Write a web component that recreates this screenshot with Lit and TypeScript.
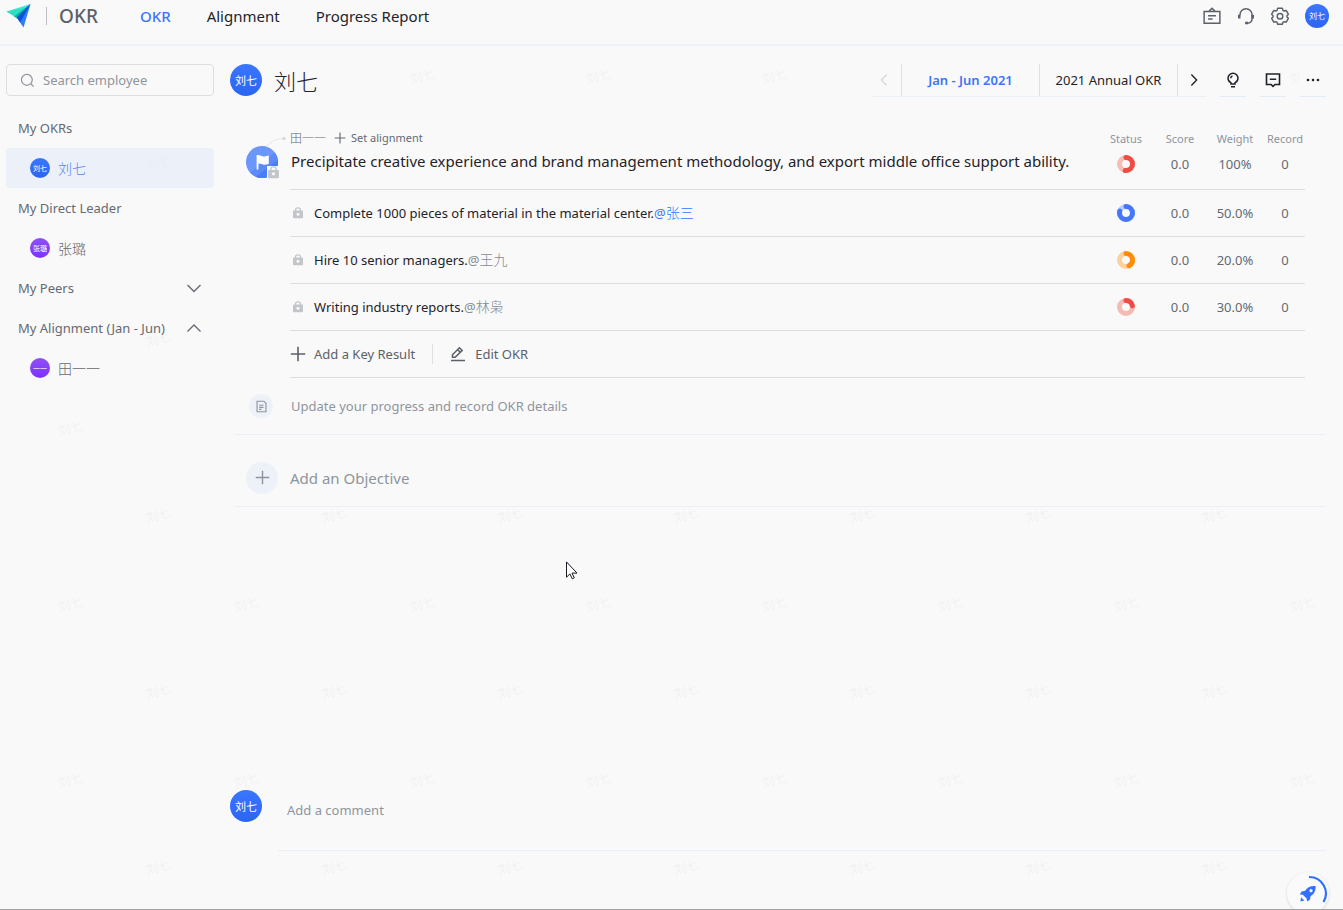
import { LitElement, html, css, svg } from "lit";
import { customElement, property, state } from "lit/decorators.js";
import { classMap } from "lit/directives/class-map.js";

const line = (body: unknown, size = 16, width = 1.3) => html`<svg
  width=${size}
  height=${size}
  viewBox="0 0 16 16"
  fill="none"
  stroke="currentColor"
  stroke-width=${width}
  aria-hidden="true"
>
  ${body}
</svg>`;

const icons = {
  search: svg`<circle cx="7.3" cy="7.3" r="5.8"/><path d="M11.500 11.500 14.500 14.500"/>`,
  report: svg`<path d="M1 4h14v10.500H1zM5 4l3-2.800L11 4M4.500 7.700h7M4.500 10.700h4"/>`,
  headset: svg`<path d="M2.600 7.500V7a5.400 5.400 0 0 1 10.800 0v3.500c0 2.500-1.700 3.900-4.400 3.900"/><path d="M2 6.800v3.400M14 6.800v3.400M7.200 14.300h2.600" stroke-width="2.200"/>`,
  gear: svg`<path d="M5.900 1.400h4.200l.5 1.900 1 .6 1.900-.5 2 3.400-1.300 1.200v1.200l1.300 1.200-2 3.400-1.900-.5-1 .6-.5 1.700H5.900l-.5-1.700-1-.6-1.900.5-2-3.400L1.800 9.200V8L.5 6.800l2-3.400 1.900.5 1-.6z" stroke-linejoin="round" transform="translate(0 -.3)"/><circle cx="8" cy="8.200" r="2.500"/>`,
  left: svg`<path d="M11 1.800 5 8l6 6.200"/>`,
  right: svg`<path d="M5 1.800 11 8l-6 6.200"/>`,
  down: svg`<path d="M1.500 5 8 11.500 14.500 5"/>`,
  up: svg`<path d="M1.500 11.500 8 5l6.500 6.500"/>`,
  bulb: svg`<path d="M6 12V10.800C4 9.700 3 8.200 3 6.200a5 5 0 0 1 10 0c0 2-1 3.500-3 4.600V12z"/><path d="M6 14.700h4M5.700 6.200c0-1.300.7-2 1.800-2.200"/>`,
  note: svg`<path d="M1.500 2h13v10.500H10L8 14.300 6 12.500H1.500zM4.800 7.200h6.400"/>`,
  plus: svg`<path d="M8 .8v14.400M.8 8h14.400"/>`,
  edit: svg`<path d="M2.500 11.300V8.700l6.900-7 2.800 2.700-7 6.900zM7.600 3.600l2.700 2.700M1 14.600h14"/>`,
  doc: svg`<path d="M2.500 1.500h8.500l2.500 2.500v10.500h-11zM5 6.500h5.500M5 9h5.500M5 11.500h3"/>`,
};

const lock = (size: number) => html`<svg width=${size} height=${size} viewBox="0 0 12 12" aria-hidden="true">
  <path d="M3.500 4V2.800a2.500 2 0 0 1 5 0V4" fill="none" stroke="#c2c5ca" stroke-width="1.300" />
  <rect x="1" y="3.600" width="10" height="7.600" rx=".8" fill="#c2c5ca" />
  <circle cx="6" cy="7.200" r="1.500" fill="#f9f9f9" />
</svg>`;

@customElement("user-avatar")
class UserAvatar extends LitElement {
  @property() name = "";
  @property() kind = "";

  static styles = css`
    :host {
      display: block;
      flex: none;
    }
    .disc {
      display: grid;
      place-items: center;
      width: 32px;
      height: 32px;
      border-radius: 50%;
      background: linear-gradient(#3b76ff, #2b66f3);
      color: #fff;
      font: 400 11px/1 "Noto Sans CJK SC", sans-serif;
      white-space: nowrap;
    }
    .top {
      width: 24px;
      height: 24px;
      font-size: 8px;
    }
    .small,
    .purple {
      width: 20px;
      height: 20px;
      font-size: 7px;
    }
    .purple {
      background: linear-gradient(#9050f7, #7c33fb);
    }
  `;

  render() {
    return html`<div class="disc ${this.kind}">${this.name}</div>`;
  }
}

@customElement("status-ring")
class StatusRing extends LitElement {
  @property() color = "";
  @property() track = "";
  @property({ type: Number }) share = 0;

  static styles = css`
    :host {
      display: block;
      height: 18px;
    }
  `;

  render() {
    return html`<svg width="18" height="18" viewBox="0 0 18 18" fill="none" stroke-width="5" role="img" aria-label="Status">
      <circle cx="9" cy="9" r="6.500" stroke=${this.track} />
      <circle
        cx="9"
        cy="9"
        r="6.500"
        stroke=${this.color}
        stroke-linecap="round"
        pathLength="100"
        stroke-dasharray="${this.share} 100"
        transform="rotate(-90 9 9)"
      />
    </svg>`;
  }
}

const keyResults = [
  { text: "Complete 1000 pieces of material in the material center.", owner: "张三", own: true, color: "#4577fd", track: "#b9cdfc", share: 80, weight: "50.0%" },
  { text: "Hire 10 senior managers.", owner: "王九", own: false, color: "#ff8c07", track: "#fdd09d", share: 42, weight: "20.0%" },
  { text: "Writing industry reports.", owner: "林枭", own: false, color: "#ee4c44", track: "#f5bab1", share: 22, weight: "30.0%" },
];

@customElement("app-root")
class AppRoot extends LitElement {
  @state() private period = "Jan - Jun 2021";

  static styles = css`
    :host {
      display: block;
      font: 13px/20px "Noto Sans", "Noto Sans CJK SC", sans-serif;
      color: #1f2329;
    }
    * {
      box-sizing: border-box;
    }
    svg {
      display: block;
      flex: none;
    }
    button,
    input {
      font: inherit;
      color: inherit;
      border: 0;
      margin: 0;
      padding: 0;
      background: none;
      border-radius: 0;
      outline: none;
    }
    button {
      cursor: pointer;
      text-align: left;
    }
    a {
      color: inherit;
      text-decoration: none;
    }
    h1,
    h2,
    p {
      margin: 0;
      font-weight: 400;
    }
    .cjk {
      font-family: "Noto Sans CJK SC", sans-serif;
      font-size: 14px;
      font-weight: 300;
      line-height: 1;
    }
    .page {
      position: relative;
      display: flex;
      flex-direction: column;
      min-height: 100vh;
      overflow: hidden;
      background: #f9f9f9;
      border-bottom: 1px solid #a3a3a3;
    }
    .marks {
      position: absolute;
      inset: 0;
      width: 100%;
      height: 100%;
      pointer-events: none;
    }
    .marks text {
      font: 300 13px "Noto Sans CJK SC", sans-serif;
      fill: #eceef1;
    }
    .header {
      position: relative;
      display: flex;
      align-items: center;
      height: 46px;
      padding: 0 14px 12px 6px;
      border-bottom: 2px solid #eef2f8;
    }
    .rule {
      width: 1px;
      height: 18px;
      background: #bbbfc4;
      margin: 0 12px 0 14px;
    }
    .brand {
      font-size: 19px;
      font-weight: 500;
      line-height: 24px;
      color: #5c6169;
    }
    .nav {
      display: flex;
      gap: 36px;
      margin-left: 42px;
      font-size: 15px;
      flex: 1;
    }
    .nav .current {
      color: #3f73fb;
      font-weight: 500;
    }
    .tools {
      display: flex;
      align-items: center;
      gap: 16px;
      color: #5c6169;
    }
    .body {
      position: relative;
      flex: 1;
      display: grid;
      grid-template-columns: 208px minmax(0, 1fr);
      gap: 16px;
      padding: 18px 17px 0 6px;
    }
    .search {
      display: flex;
      align-items: center;
      gap: 8px;
      height: 32px;
      padding: 0 13px;
      border: 1px solid #dcdee2;
      border-radius: 4px;
      background: #f9f9f9;
      color: #8f959e;
      margin-bottom: 12px;
    }
    .search input {
      flex: 1;
      min-width: 0;
    }
    input::placeholder {
      color: #8f959e;
      opacity: 1;
    }
    .group {
      display: flex;
      justify-content: space-between;
      align-items: center;
      width: 100%;
      height: 40px;
      padding: 0 12px;
      color: #646a73;
    }
    .person {
      display: flex;
      align-items: center;
      gap: 8px;
      height: 40px;
      padding-left: 24px;
      border-radius: 4px;
      color: #646a73;
    }
    .person.current {
      background: rgba(226, 234, 246, 0.6);
      color: #5684fb;
    }
    .main {
      display: flex;
      flex-direction: column;
    }
    .title {
      display: flex;
      align-items: flex-start;
      height: 33px;
    }
    .title h1 {
      flex: 1;
      margin-left: 12px;
      font-size: 22px;
      line-height: 32px;
    }
    .periods,
    .actions {
      display: flex;
      height: 33px;
    }
    .periods {
      background: #f9f9f9;
      border-bottom: 1px solid #ebf0f7;
    }
    .periods button {
      display: grid;
      place-items: center;
      width: 138px;
      border-left: 1px solid #dee0e3;
    }
    .periods .step {
      width: 29px;
      padding-left: 4px;
    }
    .periods .prev {
      border-left: 0;
      padding: 0 6px 0 0;
      color: #c9cdd4;
    }
    .periods .chosen {
      color: #3f73fb;
      font-weight: 600;
    }
    .actions {
      gap: 14px;
      margin-left: 14px;
    }
    .actions button {
      display: grid;
      place-items: center;
      width: 26px;
      background: #f9f9f9;
      border-bottom: 1px solid #e3ebf8;
    }
    .card {
      background: #f9f9f9;
      margin-top: 33px;
    }
    .objective {
      display: grid;
      grid-template-columns: 60px minmax(0, 1fr);
      padding-right: 21px;
    }
    .flag {
      position: relative;
      padding: 16px 0 0 16px;
    }
    .flag .badge {
      position: absolute;
      left: 37px;
      top: 36px;
      background: #f9f9f9;
    }
    .flag .link {
      position: absolute;
      left: 36px;
      top: 5px;
    }
    .row {
      display: grid;
      grid-template-columns: minmax(0, 1fr) 58px 50px 60px 40px;
      align-items: center;
      height: 47px;
      border-bottom: 1px solid #dcdee2;
    }
    .head {
      height: 60px;
      align-items: start;
    }
    .cell {
      display: grid;
      justify-items: center;
      text-align: center;
      color: #646a73;
    }
    .head .cell {
      grid-template-rows: 18px 31px;
      align-items: center;
    }
    .head small {
      font-size: 11px;
      line-height: 18px;
      color: #8f959e;
    }
    .meta {
      display: flex;
      align-items: center;
      gap: 8px;
      height: 16px;
      font-size: 11px;
      line-height: 16px;
      color: #646a73;
    }
    .meta .cjk {
      font-size: 12px;
    }
    .meta button,
    .ops button {
      display: flex;
      align-items: center;
      gap: 5px;
    }
    .head h2 {
      font-size: 15px;
      line-height: 24px;
      margin-top: 3px;
      padding-left: 1px;
    }
    .result {
      display: flex;
      align-items: center;
      gap: 10px;
      padding-left: 2px;
    }
    .mention {
      color: #858b94;
    }
    .mention.own {
      color: #2f7bfd;
    }
    .ops {
      display: flex;
      align-items: center;
      height: 47px;
      border-bottom: 1px solid #dcdee2;
      color: #5c6169;
    }
    .ops button {
      gap: 8px;
    }
    .ops button + button {
      gap: 9px;
      margin-left: 17px;
      padding-left: 17px;
      border-left: 1px solid #dee0e3;
    }
    .update,
    .add {
      display: flex;
      align-items: center;
      width: calc(100% - 4px);
      margin-left: 4px;
      padding-left: 12px;
      border-bottom: 1px solid #ebf0f8;
      color: #8f959e;
    }
    .update {
      height: 57px;
      padding-left: 15px;
    }
    .add {
      height: 72px;
      padding-top: 14px;
      font-size: 15px;
    }
    .dot {
      display: grid;
      place-items: center;
      width: 24px;
      height: 24px;
      border-radius: 50%;
      background: #edf2f8;
      margin-right: 18px;
    }
    .add .dot {
      width: 32px;
      height: 32px;
      margin-right: 12px;
    }
    .comment {
      display: flex;
      gap: 16px;
      margin-top: auto;
      margin-bottom: 58px;
      height: 61px;
    }
    .comment input {
      flex: 1;
      padding: 0 9px 20px;
      border-bottom: 1px solid #e9eff8;
    }
    .rocket {
      position: absolute;
      right: 14px;
      bottom: -5px;
      width: 42px;
      height: 42px;
      border-radius: 50%;
      background: #fafafa;
      box-shadow: 0 1px 3px rgba(31, 35, 41, 0.16);
    }
    .pointer {
      position: absolute;
      left: 566px;
      top: 561px;
    }
  `;

  private person(name: string, kind: string, label = name, current = false) {
    return html`<a href="#" class=${classMap({ person: true, current })}>
      <user-avatar name=${label} kind=${kind}></user-avatar><span class="cjk">${name}</span>
    </a>`;
  }

  render() {
    return html`<div class="page">
      <svg class="marks" aria-hidden="true">
        <defs>
          <pattern id="mark" width="176" height="176" patternUnits="userSpaceOnUse">
            <text transform="translate(147 171) rotate(-15)">刘七</text>
            <text transform="translate(59 84) rotate(-15)">刘七</text>
          </pattern>
        </defs>
        <rect y="50" width="100%" height="100%" fill="url(#mark)" />
      </svg>

      <header class="header">
        <svg width="26" height="26" viewBox="0 0 26 26" aria-hidden="true">
          <path d="M.500 8.500 24.500 1 10.500 14.300z" fill="#3fe8d0" />
          <path d="M.500 8.500 21 4.500 9 13.800z" fill="#2fdcc4" />
          <path d="M8 13.500 24 1.500 12 16z" fill="#00b3a3" />
          <path d="M24.500 1 10.800 14.500 17.500 24.500z" fill="#2f7dfa" />
          <path d="M24.500 1 10.800 14.500l3.400 5z" fill="#0e53d4" />
        </svg>
        <span class="rule"></span>
        <span class="brand">OKR</span>
        <nav class="nav">
          <a href="#" class="current">OKR</a>
          <a href="#">Alignment</a>
          <a href="#">Progress Report</a>
        </nav>
        <div class="tools">
          <button aria-label="Reports">${line(icons.report, 18)}</button>
          <button aria-label="Support">${line(icons.headset, 18)}</button>
          <button aria-label="Settings">${line(icons.gear, 18)}</button>
          <user-avatar name="刘七" kind="top"></user-avatar>
        </div>
      </header>

      <div class="body">
        <aside>
          <label class="search">
            ${line(icons.search, 15)}
            <input type="text" placeholder="Search employee" aria-label="Search employee" />
          </label>
          <div class="group">My OKRs</div>
          ${this.person("刘七", "small", "刘七", true)}
          <div class="group">My Direct Leader</div>
          ${this.person("张璐", "purple")}
          <button class="group" aria-expanded="false">My Peers ${line(icons.down, 16)}</button>
          <button class="group" aria-expanded="true">My Alignment (Jan - Jun) ${line(icons.up, 16)}</button>
          ${this.person("田一一", "purple", "一一")}
        </aside>

        <main class="main">
          <div class="title">
            <user-avatar name="刘七"></user-avatar>
            <h1 class="cjk">刘七</h1>
            <div class="periods">
              <button class="step prev" aria-label="Earlier">${line(icons.left, 14, 1.2)}</button>
              ${["Jan - Jun 2021", "2021 Annual OKR"].map(
                (p) => html`<button class=${classMap({ chosen: p === this.period })} @click=${() => (this.period = p)}>${p}</button>`
              )}
              <button class="step" aria-label="Later">${line(icons.right, 14, 1.6)}</button>
            </div>
            <div class="actions">
              <button aria-label="Tips">${line(icons.bulb, 16, 1.5)}</button>
              <button aria-label="Notes">${line(icons.note, 16, 1.6)}</button>
              <button aria-label="More">
                <svg width="14" height="4" viewBox="0 0 14 4" fill="#1f2329">
                  <circle cx="2" cy="2" r="1.300" /><circle cx="7" cy="2" r="1.300" /><circle cx="12" cy="2" r="1.300" />
                </svg>
              </button>
            </div>
          </div>

          <section class="card">
            <div class="objective">
              <div class="flag">
                <svg width="32" height="32" viewBox="0 0 32 32" aria-hidden="true">
                  <defs>
                    <clipPath id="disc"><circle cx="16" cy="16" r="16" /></clipPath>
                  </defs>
                  <g clip-path="url(#disc)">
                    <path d="M0 0h32v32H0z" fill="#6b96fb" />
                    <path d="M0 30 32 4v28H0z" fill="#5c8afa" />
                    <path d="M8 32 32 14v18z" fill="#4a7cf8" />
                  </g>
                  <path d="M11.500 9v14.500" stroke="#fff" stroke-width="1.800" />
                  <path d="M11.500 9.500c3-1.200 4.500 1.200 7 1 1.700 0 2.800-.5 4.300-.9v8.200c-1.500.6-2.800 1-4.500.9-2.500-.2-4-2-6.800-.9z" fill="#fff" />
                </svg>
                <svg class="link" width="20" height="12" viewBox="0 0 20 12" aria-hidden="true">
                  <path d="M1 11Q7 4 17 3.500" fill="none" stroke="#dee0e3" stroke-dasharray="3 1" />
                  <circle cx="18" cy="3.500" r="1.500" fill="#d0d3d8" />
                </svg>
                <span class="badge">${lock(13)}</span>
              </div>
              <div>
                <div class="row head">
                  <div>
                    <div class="meta">
                      <span class="cjk">田一一</span>
                      <button>${line(icons.plus, 12, 1.5)} Set alignment</button>
                    </div>
                    <h2>
                      Precipitate creative experience and brand management methodology, and export middle office support
                      ability.
                    </h2>
                  </div>
                  <div class="cell">
                    <small>Status</small>
                    <status-ring color="#ee4c44" track="#f7bdb2" share="52"></status-ring>
                  </div>
                  <div class="cell"><small>Score</small>0.0</div>
                  <div class="cell"><small>Weight</small>100%</div>
                  <div class="cell"><small>Record</small>0</div>
                </div>
                ${keyResults.map(
                  (k) => html`<div class="row">
                    <div class="result">
                      ${lock(12)}
                      <p>${k.text}<span class=${classMap({ mention: true, own: k.own })}>@<span class="cjk">${k.owner}</span></span></p>
                    </div>
                    <div class="cell">
                      <status-ring color=${k.color} track=${k.track} share=${k.share}></status-ring>
                    </div>
                    <div class="cell">0.0</div>
                    <div class="cell">${k.weight}</div>
                    <div class="cell">0</div>
                  </div>`
                )}
                <div class="ops">
                  <button>${line(icons.plus, 16, 1.6)} Add a Key Result</button>
                  <button>${line(icons.edit, 16, 1.5)} Edit OKR</button>
                </div>
              </div>
            </div>
            <button class="update">
              <span class="dot">${line(icons.doc, 13, 1.4)}</span>Update your progress and record OKR details
            </button>
            <button class="add"><span class="dot">${line(icons.plus, 15, 1.5)}</span>Add an Objective</button>
          </section>

          <div class="comment">
            <user-avatar name="刘七"></user-avatar>
            <input type="text" placeholder="Add a comment" aria-label="Add a comment" />
          </div>
        </main>
      </div>

      <button class="rocket" aria-label="Getting started">
        <svg width="42" height="42" viewBox="0 0 42 42" fill="none">
          <path d="M22 5a16.500 16.500 0 0 1 14.500 25" stroke="#3370ff" stroke-width="2.200" />
          <path d="M28.500 14c-5-.5-8.200 1.500-10.300 4.800l-3.600.6-1.800 3 3 .4 3.800 3.800.5 3 2.800-1.800.7-3.600c3.500-2.200 5.300-5.200 4.900-10.200z" fill="#3370ff" />
          <path d="m14 25.200 3.300 3.300-3.800 1z" fill="#3370ff" />
          <circle cx="24" cy="18.700" r="1.600" fill="#fafafa" />
        </svg>
      </button>
      <svg class="pointer" width="13" height="19" viewBox="0 0 13 19" aria-hidden="true">
        <path d="M.500.900v15.300l3.400-3.300 2.400 4.900 2-1-2.300-4.700h5z" fill="#fff" stroke="#1a1a24" />
      </svg>
    </div>`;
  }
}
